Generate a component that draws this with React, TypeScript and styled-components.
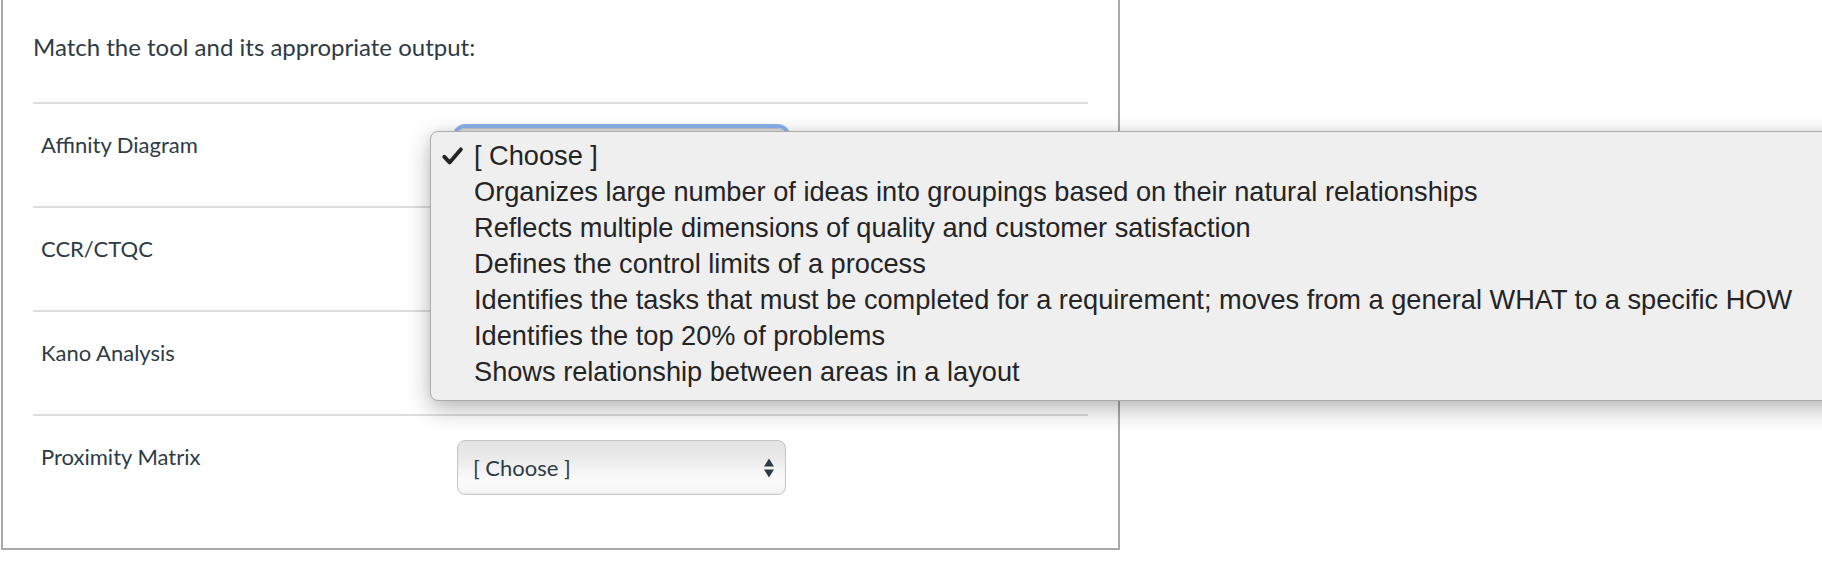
import styled, { createGlobalStyle } from "styled-components";

const GlobalStyle = createGlobalStyle`
  html, body {
    margin: 0;
    padding: 0;
    background: #ffffff;
    overflow: hidden;
  }
  * {
    box-sizing: border-box;
  }
`;

const Panel = styled.div`
  margin-left: 1px;
  width: 1119px;
  border: 2px solid #a9a9a9;
  border-top: none;
  padding: 0 30px 30px;
  font-family: "Lato", "Liberation Sans", sans-serif;
  color: #2d3b45;
`;

const Title = styled.div`
  font-size: 24px;
  line-height: 35px;
  padding: 29px 0 38px;
`;

const Row = styled.div`
  display: grid;
  grid-template-columns: 424px 1fr;
  border-top: 2px solid #dddddd;
  padding: 24px 0 23px;
`;

const Label = styled.div`
  padding-left: 8px;
  font-size: 22px;
  line-height: 33px;
`;

const SelectWrap = styled.div`
  position: relative;
  width: 329px;
`;

const SelectBox = styled.div<{ $focused?: boolean }>`
  display: flex;
  align-items: center;
  justify-content: space-between;
  height: 55px;
  padding: 0 11px 0 15px;
  border: 1px solid #c6c6c6;
  border-radius: 8px;
  background: linear-gradient(
    to bottom,
    #e3e3e3 0%,
    #ebebeb 35%,
    #fbfbfb 72%,
    #f6f6f6 100%
  );
  box-shadow: ${(p) =>
    p.$focused
      ? "0 0 0 4px rgba(110, 158, 232, 0.8)"
      : "inset 0 -2px 3px rgba(0, 0, 0, 0.04)"};
  font-size: 22px;
  color: #2d3b45;
`;

// selects that sit under the open menu keep only their box
const SelectText = styled.span<{ $covered?: boolean }>`
  visibility: ${(p) => (p.$covered ? "hidden" : "visible")};
`;

const Menu = styled.ul`
  position: absolute;
  left: -27px;
  top: 3px;
  width: 1420px;
  margin: 0;
  padding: 6px 0 10px;
  list-style: none;
  background: #efefef;
  border: 1px solid #acacac;
  border-radius: 8px;
  box-shadow: 0 8px 24px rgba(0, 0, 0, 0.28), 0 0 10px rgba(0, 0, 0, 0.06);
  font-family: "Liberation Sans", Arial, sans-serif;
  font-size: 27.2px;
  line-height: 36px;
  color: #242424;
  z-index: 10;
`;

const MenuItem = styled.li`
  display: flex;
  align-items: center;
  height: 36px;
  white-space: nowrap;
`;

const CheckSlot = styled.span`
  display: flex;
  align-items: center;
  width: 43px;
  padding-left: 11px;
  flex-shrink: 0;
`;

const Check = () => (
  <svg width="21" height="18" viewBox="0 0 21 18">
    <path
      d="M2.4 9.8 L7.6 15.4 L18.8 2.4"
      fill="none"
      stroke="#242424"
      strokeWidth="3.9"
      strokeLinecap="round"
      strokeLinejoin="round"
    />
  </svg>
);

const Arrows = () => (
  <svg width="10" height="20" viewBox="0 0 10 20">
    <polygon points="0,8.5 5,0.5 10,8.5" fill="#2d3b45" />
    <polygon points="0,11.5 10,11.5 5,19.5" fill="#2d3b45" />
  </svg>
);

const options = [
  "[ Choose ]",
  "Organizes large number of ideas into groupings based on their natural relationships",
  "Reflects multiple dimensions of quality and customer satisfaction",
  "Defines the control limits of a process",
  "Identifies the tasks that must be completed for a requirement; moves from a general WHAT to a specific HOW",
  "Identifies the top 20% of problems",
  "Shows relationship between areas in a layout",
];

const tools = ["Affinity Diagram", "CCR/CTQC", "Kano Analysis", "Proximity Matrix"];

const App = () => {
  return (
    <>
      <GlobalStyle />
      <Panel>
        <Title>Match the tool and its appropriate output:</Title>
        {tools.map((tool, i) => (
          <Row key={tool}>
            <Label>{tool}</Label>
            <SelectWrap>
              <SelectBox $focused={i === 0}>
                <SelectText $covered={i < 3}>[ Choose ]</SelectText>
                <Arrows />
              </SelectBox>
              {i === 0 && (
                <Menu>
                  {options.map((opt, j) => (
                    <MenuItem key={opt}>
                      <CheckSlot>{j === 0 && <Check />}</CheckSlot>
                      {opt}
                    </MenuItem>
                  ))}
                </Menu>
              )}
            </SelectWrap>
          </Row>
        ))}
      </Panel>
    </>
  );
};

export default App;
